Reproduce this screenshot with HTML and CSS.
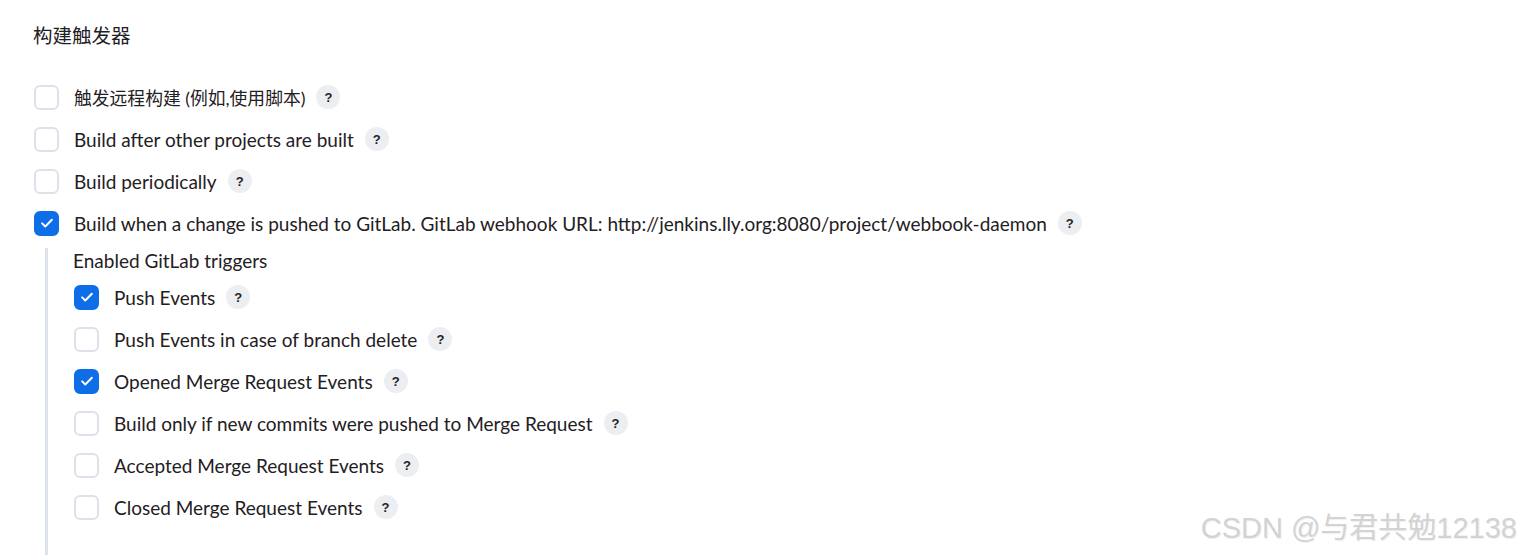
FILE: index.html
```html
<!DOCTYPE html>
<html lang="zh">
<head>
<meta charset="utf-8">
<title>构建触发器</title>
<link rel="stylesheet" href="styles.css">
</head>
<body>
<div class="page">
  <div class="section-title">构建触发器</div>
  <div class="options">
    <div class="row"><span class="cb"></span><span class="label label-cjk">触发远程构建 (例如,使用脚本)</span><span class="help">?</span></div>
    <div class="row"><span class="cb"></span><span class="label">Build after other projects are built</span><span class="help">?</span></div>
    <div class="row"><span class="cb"></span><span class="label">Build periodically</span><span class="help">?</span></div>
    <div class="row"><span class="cb checked"><svg viewBox="0 0 24 24" width="18" height="18"><path d="M5.5 12.5l4.2 4.2 8.8-9" fill="none" stroke="#fff" stroke-width="2.6" stroke-linecap="round" stroke-linejoin="round"/></svg></span><span class="label">Build when a change is pushed to GitLab. GitLab webhook URL: http://jenkins.lly.org:8080/project/webbook-daemon</span><span class="help">?</span></div>
  </div>
  <div class="nested">
    <div class="nested-title">Enabled GitLab triggers</div>
    <div class="row"><span class="cb checked"><svg viewBox="0 0 24 24" width="18" height="18"><path d="M5.5 12.5l4.2 4.2 8.8-9" fill="none" stroke="#fff" stroke-width="2.6" stroke-linecap="round" stroke-linejoin="round"/></svg></span><span class="label">Push Events</span><span class="help">?</span></div>
    <div class="row"><span class="cb"></span><span class="label">Push Events in case of branch delete</span><span class="help">?</span></div>
    <div class="row"><span class="cb checked"><svg viewBox="0 0 24 24" width="18" height="18"><path d="M5.5 12.5l4.2 4.2 8.8-9" fill="none" stroke="#fff" stroke-width="2.6" stroke-linecap="round" stroke-linejoin="round"/></svg></span><span class="label">Opened Merge Request Events</span><span class="help">?</span></div>
    <div class="row"><span class="cb"></span><span class="label">Build only if new commits were pushed to Merge Request</span><span class="help">?</span></div>
    <div class="row"><span class="cb"></span><span class="label">Accepted Merge Request Events</span><span class="help">?</span></div>
    <div class="row"><span class="cb"></span><span class="label">Closed Merge Request Events</span><span class="help">?</span></div>
  </div>
</div>
<div class="watermark">CSDN @与君共勉12138</div>
</body>
</html>
```
FILE: styles.css
```css
html, body {
  margin: 0;
  padding: 0;
  background: #fff;
  height: 555px;
  overflow: hidden;
}
body {
  font-family: Lato, "Noto Sans CJK SC", sans-serif;
  color: #1f2023;
  position: relative;
}
.page {
  padding: 22px 0 0 33px;
}
.section-title {
  font-size: 19.5px;
  line-height: 28px;
  margin-bottom: 26px;
}
.row {
  display: flex;
  align-items: center;
  height: 42px;
  padding-left: 1px;
}
.cb {
  box-sizing: border-box;
  width: 25px;
  height: 25px;
  border: 2px solid #dde2ea;
  border-radius: 6px;
  background: #fff;
  flex: none;
  display: flex;
  align-items: center;
  justify-content: center;
}
.cb.checked {
  background: #0d6ee8;
  border-color: #0d6ee8;
}
.label {
  margin-left: 15px;
  font-size: 19px;
  white-space: nowrap;
}
.label-cjk {
  font-size: 17.8px;
}
.help {
  margin-left: 11px;
  width: 24px;
  height: 24px;
  border-radius: 50%;
  background: #eceef2;
  font-family: "Liberation Sans", sans-serif;
  font-size: 13px;
  font-weight: 700;
  display: flex;
  align-items: center;
  justify-content: center;
  color: #222;
  flex: none;
}
.nested {
  margin: 4px 0 0 12px;
  border-left: 3px solid #dde3ec;
  padding-left: 25px;
  height: 320px;
}
.nested-title {
  font-size: 19px;
  line-height: 26px;
  margin-bottom: 2px;
}
.watermark {
  position: absolute;
  right: 3px;
  bottom: 9px;
  font-family: "Liberation Sans", "Noto Sans CJK SC", sans-serif;
  font-size: 29px;
  color: #d3d3d3;
  text-shadow: 1px 1px 1px #f0f0f0;
  white-space: nowrap;
}
```
